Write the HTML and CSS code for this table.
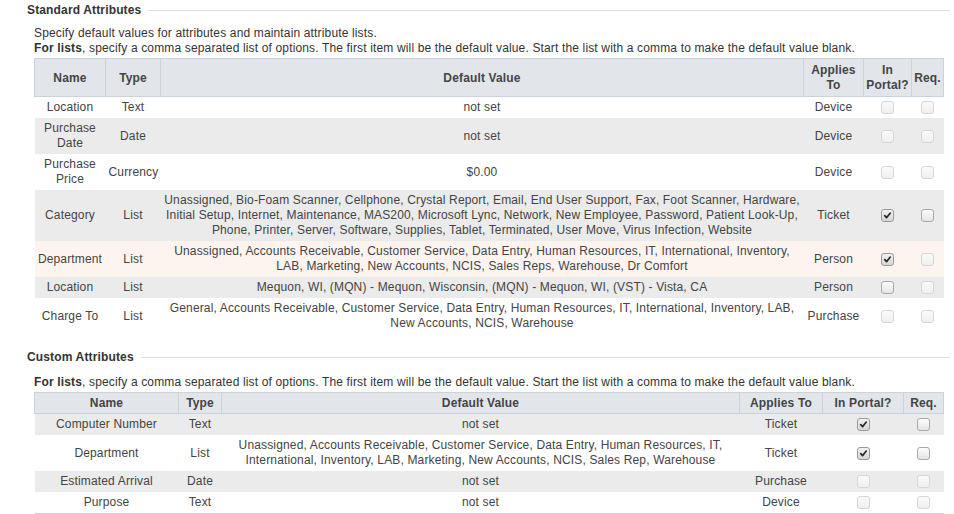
FILE: index.html
```html
<!DOCTYPE html>
<html>
<head>
<meta charset="utf-8">
<link rel="stylesheet" href="styles.css">
</head>
<body>
<section class="section std">
  <div class="legend"><span class="legend-text">Standard Attributes</span><span class="legend-line"></span></div>
  <div class="desc">
    <div>Specify default values for attributes and maintain attribute lists.</div>
    <div><b>For lists</b>, specify a comma separated list of options. The first item will be the default value. Start the list with a comma to make the default value blank.</div>
  </div>
  <table class="attr t1">
    <colgroup>
      <col class="c-name"><col class="c-type"><col class="c-def"><col class="c-app"><col class="c-por"><col class="c-req">
    </colgroup>
    <thead>
      <tr><th>Name</th><th>Type</th><th>Default Value</th><th>Applies To</th><th>In Portal?</th><th>Req.</th></tr>
    </thead>
    <tbody>
      <tr><td>Location</td><td>Text</td><td>not set</td><td>Device</td><td><span class="cb dis"></span></td><td><span class="cb dis"></span></td></tr>
      <tr class="alt"><td>Purchase Date</td><td>Date</td><td>not set</td><td>Device</td><td><span class="cb dis"></span></td><td><span class="cb dis"></span></td></tr>
      <tr><td>Purchase Price</td><td>Currency</td><td>$0.00</td><td>Device</td><td><span class="cb dis"></span></td><td><span class="cb dis"></span></td></tr>
      <tr class="alt"><td>Category</td><td>List</td><td>Unassigned, Bio-Foam Scanner, Cellphone, Crystal Report, Email, End User Support, Fax, Foot Scanner, Hardware, Initial Setup, Internet, Maintenance, MAS200, Microsoft Lync, Network, New Employee, Password, Patient Look-Up, Phone, Printer, Server, Software, Supplies, Tablet, Terminated, User Move, Virus Infection, Website</td><td>Ticket</td><td><span class="cb on"><svg viewBox="0 0 13 13"><path d="M3.2 6.6 L5.4 9 L9.8 3.6"/></svg></span></td><td><span class="cb"></span></td></tr>
      <tr class="hl"><td>Department</td><td>List</td><td>Unassigned, Accounts Receivable, Customer Service, Data Entry, Human Resources, IT, International, Inventory, LAB, Marketing, New Accounts, NCIS, Sales Reps, Warehouse, Dr Comfort</td><td>Person</td><td><span class="cb on"><svg viewBox="0 0 13 13"><path d="M3.2 6.6 L5.4 9 L9.8 3.6"/></svg></span></td><td><span class="cb dis"></span></td></tr>
      <tr class="alt"><td>Location</td><td>List</td><td>Mequon, WI, (MQN) - Mequon, Wisconsin, (MQN) - Mequon, WI, (VST) - Vista, CA</td><td>Person</td><td><span class="cb"></span></td><td><span class="cb dis"></span></td></tr>
      <tr><td>Charge To</td><td>List</td><td>General, Accounts Receivable, Customer Service, Data Entry, Human Resources, IT, International, Inventory, LAB, New Accounts, NCIS, Warehouse</td><td>Purchase</td><td><span class="cb dis"></span></td><td><span class="cb dis"></span></td></tr>
    </tbody>
  </table>
</section>

<section class="section cust">
  <div class="legend"><span class="legend-text">Custom Attributes</span><span class="legend-line"></span></div>
  <div class="desc desc2">
    <div><b>For lists</b>, specify a comma separated list of options. The first item will be the default value. Start the list with a comma to make the default value blank.</div>
  </div>
  <table class="attr t2">
    <colgroup>
      <col class="c-name"><col class="c-type"><col class="c-def"><col class="c-app"><col class="c-por"><col class="c-req">
    </colgroup>
    <thead>
      <tr><th>Name</th><th>Type</th><th>Default Value</th><th>Applies To</th><th>In Portal?</th><th>Req.</th></tr>
    </thead>
    <tbody>
      <tr class="alt"><td>Computer Number</td><td>Text</td><td>not set</td><td>Ticket</td><td><span class="cb on"><svg viewBox="0 0 13 13"><path d="M3.2 6.6 L5.4 9 L9.8 3.6"/></svg></span></td><td><span class="cb"></span></td></tr>
      <tr><td>Department</td><td>List</td><td>Unassigned, Accounts Receivable, Customer Service, Data Entry, Human Resources, IT, International, Inventory, LAB, Marketing, New Accounts, NCIS, Sales Rep, Warehouse</td><td>Ticket</td><td><span class="cb on"><svg viewBox="0 0 13 13"><path d="M3.2 6.6 L5.4 9 L9.8 3.6"/></svg></span></td><td><span class="cb"></span></td></tr>
      <tr class="alt"><td>Estimated Arrival</td><td>Date</td><td>not set</td><td>Purchase</td><td><span class="cb dis"></span></td><td><span class="cb dis"></span></td></tr>
      <tr><td>Purpose</td><td>Text</td><td>not set</td><td>Device</td><td><span class="cb dis"></span></td><td><span class="cb dis"></span></td></tr>
    </tbody>
  </table>
</section>
</body>
</html>
```
FILE: styles.css
```css
html, body {
  margin: 0;
  padding: 0;
  background: #fff;
}
body {
  font-family: "Liberation Sans", Arial, sans-serif;
  font-size: 12px;
  letter-spacing: 0.15px;
  color: #444;
  width: 954px;
}
.section {
  padding: 0 4px 0 27px;
}
.std {
  padding-top: 3px;
}
.cust {
  padding-top: 16px;
}
.legend {
  display: flex;
  align-items: center;
  height: 14px;
  line-height: 14px;
}
.legend-text {
  font-weight: bold;
  color: #333;
  padding-right: 7px;
}
.legend-line {
  flex: 1;
  height: 1px;
  background: #dcdcdc;
}
.desc {
  margin: 9px 0 0 7px;
  line-height: 15px;
  color: #333;
}
.desc2 {
  margin-top: 11px;
}
.desc b {
  color: #333;
}
table.attr {
  margin: 2px 0 0 7px;
  width: 909px;
  border-collapse: collapse;
  table-layout: fixed;
}
.t2 {
  margin-top: 0;
  border-bottom: 1px solid #d0d0d0;
}
.attr th {
  background: #e2e6eb;
  border: 1px solid #ccd2d9;
  font-weight: bold;
  color: #444;
  line-height: 15px;
  padding: 4px 2px 3px;
  text-align: center;
}
.t2 th {
  padding: 3px 2px 2px;
}
.attr td {
  text-align: center;
  line-height: 15px;
  padding: 3px 3px;
  vertical-align: middle;
}
.attr tr.alt td {
  background: #ebebeb;
}
.attr tr.hl td {
  background: #fdf4ef;
}
.t1 .c-name { width: 71px; }
.t1 .c-type { width: 55px; }
.t1 .c-def { width: 643px; }
.t1 .c-app { width: 60px; }
.t1 .c-por { width: 48px; }
.t1 .c-req { width: 32px; }
.t2 .c-name { width: 144px; }
.t2 .c-type { width: 43px; }
.t2 .c-def { width: 518px; }
.t2 .c-app { width: 83px; }
.t2 .c-por { width: 81px; }
.t2 .c-req { width: 40px; }
.cb {
  display: inline-block;
  width: 13px;
  height: 13px;
  box-sizing: border-box;
  border: 1px solid #a9a9a9;
  border-radius: 3px;
  background: linear-gradient(#fdfdfd, #e4e4e4);
  vertical-align: middle;
}
.cb.dis {
  border-color: #d6d6d6;
  background: linear-gradient(#fafafa, #efefef);
}
.cb.on {
  background: linear-gradient(#f2f2f2, #d6d6d6);
  border-color: #9a9a9a;
}
.cb svg {
  display: block;
  width: 11px;
  height: 11px;
}
.cb svg path {
  fill: none;
  stroke: #2a2a2a;
  stroke-width: 2;
  stroke-linecap: round;
  stroke-linejoin: round;
}
```
